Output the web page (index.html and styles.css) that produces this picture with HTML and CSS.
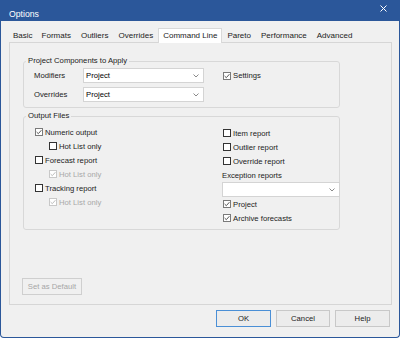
FILE: index.html
```html
<!DOCTYPE html>
<html>
<head>
<meta charset="utf-8">
<link rel="stylesheet" href="styles.css">
</head>
<body>
<div class="window">
  <div class="titlebar">
    <span class="title">Options</span>
    <svg class="close" width="7" height="7" viewBox="0 0 7 7"><path d="M0.5 0.5L6.5 6.5M6.5 0.5L0.5 6.5" stroke="#fff" stroke-width="1" fill="none"/></svg>
  </div>
  <div class="tabs">
    <span class="tab first">Basic</span>
    <span class="tab">Formats</span>
    <span class="tab">Outliers</span>
    <span class="tab">Overrides</span>
    <span class="tab active">Command Line</span>
    <span class="tab">Pareto</span>
    <span class="tab">Performance</span>
    <span class="tab">Advanced</span>
  </div>
  <div class="panel">
    <fieldset class="group g1">
      <legend>Project Components to Apply</legend>
      <div class="g1-body">
        <div class="combos">
          <span class="lbl">Modifiers</span>
          <div class="combo"><span>Project</span><svg width="6" height="4" viewBox="0 0 6 4"><path d="M0.5 0.5L3 3L5.5 0.5" stroke="#8a8a8a" fill="none"/></svg></div>
          <span class="lbl">Overrides</span>
          <div class="combo"><span>Project</span><svg width="6" height="4" viewBox="0 0 6 4"><path d="M0.5 0.5L3 3L5.5 0.5" stroke="#8a8a8a" fill="none"/></svg></div>
        </div>
        <div class="settings">
          <div class="row cb checked"><span class="box"><svg width="6" height="6" viewBox="0 0 6 6"><path d="M0.6 3L2.3 4.7L5.4 1.2" stroke="#555" fill="none"/></svg></span>Settings</div>
        </div>
      </div>
    </fieldset>
    <fieldset class="group g2">
      <legend>Output Files</legend>
      <div class="g2-body">
        <div class="col-left">
          <div class="row cb checked"><span class="box"><svg width="6" height="6" viewBox="0 0 6 6"><path d="M0.6 3L2.3 4.7L5.4 1.2" stroke="#555" fill="none"/></svg></span>Numeric output</div>
          <div class="row cb indent"><span class="box"></span>Hot List only</div>
          <div class="row cb"><span class="box"></span>Forecast report</div>
          <div class="row cb indent disabled checked"><span class="box"><svg width="6" height="6" viewBox="0 0 6 6"><path d="M0.6 3L2.3 4.7L5.4 1.2" stroke="#bdbdbd" fill="none"/></svg></span>Hot List only</div>
          <div class="row cb"><span class="box"></span>Tracking report</div>
          <div class="row cb indent disabled checked"><span class="box"><svg width="6" height="6" viewBox="0 0 6 6"><path d="M0.6 3L2.3 4.7L5.4 1.2" stroke="#bdbdbd" fill="none"/></svg></span>Hot List only</div>
        </div>
        <div class="col-right">
          <div class="row cb"><span class="box"></span>Item report</div>
          <div class="row cb"><span class="box"></span>Outlier report</div>
          <div class="row cb"><span class="box"></span>Override report</div>
          <div class="row lbl-row">Exception reports</div>
          <div class="combo wide"><span></span><svg width="6" height="4" viewBox="0 0 6 4"><path d="M0.5 0.5L3 3L5.5 0.5" stroke="#8a8a8a" fill="none"/></svg></div>
          <div class="row cb checked"><span class="box"><svg width="6" height="6" viewBox="0 0 6 6"><path d="M0.6 3L2.3 4.7L5.4 1.2" stroke="#555" fill="none"/></svg></span>Project</div>
          <div class="row cb checked"><span class="box"><svg width="6" height="6" viewBox="0 0 6 6"><path d="M0.6 3L2.3 4.7L5.4 1.2" stroke="#555" fill="none"/></svg></span>Archive forecasts</div>
        </div>
      </div>
    </fieldset>
    <button class="btn setdefault" disabled>Set as Default</button>
  </div>
  <div class="buttons">
    <button class="btn default w55">OK</button>
    <button class="btn w54">Cancel</button>
    <button class="btn w55">Help</button>
  </div>
</div>
</body>
</html>
```
FILE: styles.css
```css
html, body {
  margin: 0;
  padding: 0;
  background: #ffffff;
}
body {
  font-family: "Liberation Sans", Arial, sans-serif;
  font-size: 7.7px;
  color: #222222;
}
.window {
  width: 400px;
  height: 338px;
  box-sizing: border-box;
  border: 1px solid #2b579a;
  border-top: 0;
  border-radius: 0 0 4px 4px;
  background: #f0f0f0;
  display: flex;
  flex-direction: column;
  overflow: hidden;
}
.titlebar {
  height: 21px;
  flex: none;
  background: #2b579a;
  color: #ffffff;
  display: flex;
  justify-content: space-between;
  align-items: flex-start;
}
.title {
  font-size: 8.7px;
  line-height: 10px;
  margin: 9px 0 0 8px;
}
.close {
  margin: 5px 12px 0 0;
}
.tabs {
  display: flex;
  align-items: flex-end;
  height: 15px;
  margin: 6px 0 0 8px;
  flex: none;
  font-size: 8px;
}
.tab {
  padding: 0 5px;
  line-height: 13px;
  white-space: nowrap;
}
.tab.first {
  padding-left: 4px;
  padding-right: 4px;
}
.tab.active {
  background: #ffffff;
  border: 1px solid #d9d9d9;
  border-bottom: 0;
  line-height: 14px;
  padding: 0 4px;
  margin-bottom: -1px;
  position: relative;
  z-index: 1;
}
.panel {
  margin-left: 8px;
  width: 383px;
  height: 263px;
  box-sizing: border-box;
  border: 1px solid #d6d6d6;
  background: #f0f0f0;
  display: flex;
  flex-direction: column;
  flex: none;
}
.group {
  width: 317px;
  box-sizing: border-box;
  margin: 0 0 0 13px;
  padding: 0;
  border: 1px solid #d8d8d8;
  border-radius: 3px;
  min-width: 0;
}
.group legend {
  padding: 0 2px;
  margin-left: 2px;
  line-height: 10px;
}
.g1 {
  margin-top: 13px;
}
.g1-body {
  display: flex;
  padding: 2px 0 5px 10px;
}
.combos {
  display: grid;
  grid-template-columns: 49px 121px;
  grid-auto-rows: 15px;
  row-gap: 4px;
  align-items: center;
}
.combo {
  height: 15px;
  box-sizing: border-box;
  background: #ffffff;
  border: 1px solid #d4d4d4;
  display: flex;
  align-items: center;
  justify-content: space-between;
  padding: 0 4px 0 2px;
  color: #000;
}
.settings {
  margin-left: 19px;
}
.settings .row {
  height: 15px;
}
.g2 {
  margin-top: 3px;
}
.g2-body {
  display: grid;
  grid-template-columns: 198px 1fr;
  padding: 4px 0 4px 0;
}
.col-left {
  padding-left: 11px;
}
.col-right {
  margin-top: 1px;
}
.row {
  height: 14px;
  display: flex;
  align-items: center;
  white-space: nowrap;
}
.row.indent {
  padding-left: 14px;
}
.col-right .cb {
  padding-left: 1px;
}
.combo.wide {
  margin-right: -1px;
}
.box {
  width: 8px;
  height: 8px;
  box-sizing: border-box;
  border: 1px solid #333333;
  background: #ffffff;
  margin-right: 2px;
  display: inline-flex;
  align-items: center;
  justify-content: center;
  flex: none;
}
.checked .box {
  border-color: #7a7a7a;
}
.disabled {
  color: #a8a8a8;
}
.disabled .box {
  border-color: #c8c8c8;
}
.btn {
  height: 17px;
  box-sizing: border-box;
  border: 1px solid #c8c8c8;
  background: #ececec;
  font-family: inherit;
  font-size: 7.7px;
  color: #222222;
  padding: 0;
  margin: 0;
}
.setdefault {
  width: 60px;
  margin: auto 0 9px 12px;
  color: #a6a6a6;
  border-color: #cfcfcf;
  background: #f0f0f0;
}
.buttons {
  display: flex;
  justify-content: flex-end;
  gap: 5px;
  margin-top: 5px;
  padding-right: 9px;
}
.w55 { width: 55px; }
.w54 { width: 54px; }
.btn.default {
  border-color: #4a8fd6;
}
```
